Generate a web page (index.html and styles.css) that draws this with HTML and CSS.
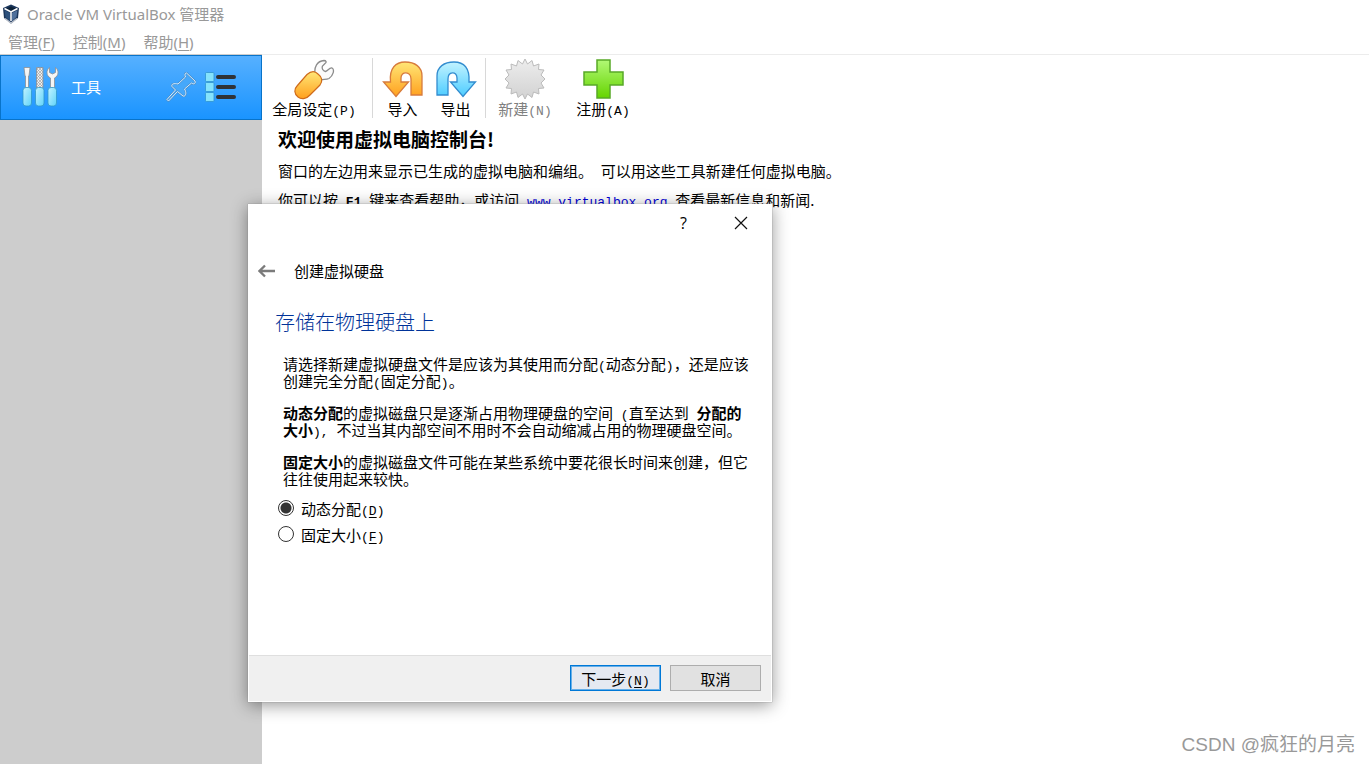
FILE: index.html
```html
<!DOCTYPE html>
<html lang="zh-CN">
<head>
<meta charset="utf-8">
<title>Oracle VM VirtualBox 管理器</title>
<link rel="stylesheet" href="styles.css">
</head>
<body>
<div class="app">
  <header class="titlebar">
    <svg class="logo" viewBox="0 0 18 20" aria-hidden="true">
      <path d="M1 4 9 .5 17 4 16 14 9 19.500 2 14Z" fill="#1b365c"/>
      <path d="M4 4.500 9 2.500 14 4.500 9 7Z" fill="#0d2138"/>
      <path d="M2.500 6 8 9V17L3.500 13Z" fill="#2c507c"/>
      <path d="M15.500 6 10 9V17L14.500 13Z" fill="#4f709b"/>
      <path d="M2.500 4.500 9 8 15.500 4.500M9 8V17" fill="none" stroke="#fff" stroke-width="1.500"/>
      <path d="M3 14.500 9 19 15 14.500" fill="none" stroke="#b8bfc9" stroke-width="1.500"/>
    </svg>
    <span>Oracle VM VirtualBox 管理器</span>
  </header>
  <nav class="menubar">
    <button class="menu">管理(<u>F</u>)</button>
    <button class="menu">控制(<u>M</u>)</button>
    <button class="menu">帮助(<u>H</u>)</button>
  </nav>
  <div class="workspace">
    <aside class="sidebar">
      <div class="tools">
        <svg class="tools-icon" viewBox="0 0 38 42" aria-hidden="true">
          <defs>
            <linearGradient id="handle" x1="0" y1="0" x2="1" y2="1"><stop offset="0" stop-color="#c4f3ff"/><stop offset="1" stop-color="#5fd3fa"/></linearGradient>
            <pattern id="knurl" width="3" height="3" patternUnits="userSpaceOnUse"><rect width="3" height="3" fill="#eee"/><path d="M0 3 3 0M0 0 3 3" stroke="#999" stroke-width=".6"/></pattern>
          </defs>
          <path d="M2 1.500H8L7 10H6.500V22H3.500V10H3Z" fill="#f5f5f5" stroke="#8b8f95" stroke-width=".8"/>
          <path d="M14.500 1.500H21V22H14.500Z" fill="url(#knurl)" stroke="#8b8f95" stroke-width=".8"/>
          <path d="M27.500 1.500C24 4 24 10 28.500 12V22H32.500V12C37 10 37 4 33.500 1.500V6.500L30.500 8 27.500 6.500Z" fill="#f5f5f5" stroke="#8b8f95" stroke-width=".8"/>
          <g fill="url(#handle)" stroke="#3198c8" stroke-width=".8"><rect x="1" y="21.500" width="8.500" height="18.500" rx="3"/><rect x="13.500" y="21.500" width="8.500" height="18.500" rx="3"/><rect x="26" y="21.500" width="8.500" height="18.500" rx="3"/></g>
        </svg>
        <span class="tools-label">工具</span>
        <button class="icon-button" aria-label="固定">
          <svg class="pin-icon" viewBox="0 0 30 30"><path id="pin" d="M20.500 1 29 9C30 12 27.500 12.500 25.500 11L18.500 17C21 21 19.500 25 17 24L11.500 19.500 2.500 29 1 27.500 9.500 18 6 14.500C5 12 8 11 12 12L19.500 5C18.500 2.500 19 1 20.500 1Z" fill="#45a8fb" stroke="#4a91cd" stroke-width="1.800"/><use href="#pin" class="pin-line"/><path d="M20.500 1 29 9C30 12 27.500 12.500 25.500 11L18.500 17C21 21 19.500 25 17 24L11.500 19.500 2.500 29 1 27.500 9.500 18 6 14.500C5 12 8 11 12 12L19.500 5C18.500 2.500 19 1 20.500 1Z" fill="none" stroke="#d5ebff"/></svg>
        </button>
        <button class="icon-button" aria-label="列表">
          <svg class="list-icon" viewBox="0 0 32 30"><g fill="#85e2fc" stroke="#2f93ce" stroke-width=".8"><rect x=".5" y=".5" width="8.500" height="9" rx="1"/><rect x=".5" y="10.500" width="8.500" height="9" rx="1"/><rect x=".5" y="20.500" width="8.500" height="9" rx="1"/></g><path d="M13 5H29M13 15H29M13 25H29" stroke="#303236" stroke-width="4" stroke-linecap="round"/></svg>
        </button>
      </div>
    </aside>
    <main class="content">
      <div class="toolbar">
        <button class="tool tool-settings">
          <svg class="tool-icon" viewBox="0 0 42 42">
            <defs><linearGradient id="orange" x1="0" y1="0" x2="0" y2="1"><stop offset="0" stop-color="#ffe676"/><stop offset="1" stop-color="#ffa01e"/></linearGradient></defs>
            <path d="M22 16C21 9 24 3 31 2.500C33 2.500 34 4 32 5.500L29.500 8C28.500 10.500 30 13 32.500 13.500C35 13 36 9.500 39 10C42 11.500 40 18 36 20.500C33 22 30 21 28.500 22L27 23Z" fill="#fbfbfb" stroke="#8b8b8b" stroke-width="1.300"/>
            <path d="M14 16.500C18 13 22 13 25 16C29 19 30 23 27 27L17 37C13 41.500 8 41.500 5 39C1 36 1 31 4 28Z" fill="url(#orange)" stroke="#cf6b1b" stroke-width="1.200"/>
          </svg>
          <span>全局设定<span class="mono">(P)</span></span>
        </button>
        <span class="separator"></span>
        <button class="tool tool-small">
          <svg class="tool-icon" viewBox="0 0 42 42"><path d="M40 37H29V21C29 13 19 13 19 20V24H26.500L14 38.500 1.500 24H8.500C7 10 14 4 23 4C33 4 40 9 40 18Z" fill="url(#orange)" stroke="#d77b3c" stroke-width="1.300"/></svg>
          <span>导入</span>
        </button>
        <button class="tool tool-small">
          <svg class="tool-icon" viewBox="0 0 42 42"><defs><linearGradient id="cyan" x1="0" y1="0" x2="0" y2="1"><stop offset="0" stop-color="#c2f3ff"/><stop offset="1" stop-color="#4dccff"/></linearGradient></defs><path d="M2 37H13V21C13 13 22 13 22 20V24H15.500L28 38.500 40.500 24H34C35 10 29 4 19 4C9 4 2 9 2 18Z" fill="url(#cyan)" stroke="#328ccf" stroke-width="1.300"/></svg>
          <span>导出</span>
        </button>
        <span class="separator"></span>
        <button class="tool tool-wide" disabled>
          <svg class="tool-icon" viewBox="0 0 42 42"><defs><linearGradient id="silver" x1="0" y1="0" x2="0" y2="1"><stop offset="0" stop-color="#ededed"/><stop offset="1" stop-color="#d2d2d2"/></linearGradient></defs><path d="M21 1 23.500 6 28 2.500 29.500 8 35 6 34.500 11.500 40 12 37 17 41 21 37 25 40 30 34.500 30.500 35 36 29.500 34 28 39.500 23.500 36 21 41 18.500 36 14 39.500 12.500 34 7 36 7.500 30.500 2 30 5 25 1 21 5 17 2 12 7.500 11.500 7 6 12.500 8 14 2.500 18.500 6Z" fill="url(#silver)" stroke="#bbb"/></svg>
          <span>新建<span class="mono">(N)</span></span>
        </button>
        <button class="tool tool-wide">
          <svg class="tool-icon" viewBox="0 0 42 42"><defs><linearGradient id="green" x1="0" y1="0" x2="0" y2="1"><stop offset="0" stop-color="#b1f875"/><stop offset="1" stop-color="#65d400"/></linearGradient></defs><path d="M15 2H28V14H41V27H28V40H15V27H2V14H15Z" fill="url(#green)" stroke="#58a927" stroke-width="1.500"/></svg>
          <span>注册<span class="mono">(A)</span></span>
        </button>
      </div>
      <section class="welcome">
        <h1>欢迎使用虚拟电脑控制台!</h1>
        <p>窗口的左边用来显示已生成的虚拟电脑和编组。<span class="mono"> </span>可以用这些工具新建任何虚拟电脑。</p>
        <p>你可以按<span class="mono"> <b>F1</b> </span>键来查看帮助，或访问<span class="mono"> <a href="#">www.virtualbox.org</a> </span>查看最新信息和新闻.</p>
      </section>
    </main>
  </div>

  <form class="dialog" role="dialog" aria-labelledby="dialog-name">
    <div class="dialog-controls">
      <button type="button" class="window-button" aria-label="帮助">?</button>
      <button type="button" class="window-button" aria-label="关闭"><svg class="close-icon" viewBox="0 0 14 14"><path d="M1 1 13 13M13 1 1 13" stroke="#111" stroke-width="1.200"/></svg></button>
    </div>
    <div class="dialog-nav">
      <button type="button" class="back" aria-label="返回"><svg class="back-icon" viewBox="0 0 17 14"><path d="M17 7H2M7 1.500 1.500 7 7 12.500" fill="none" stroke="#7b7b7b" stroke-width="2.300"/></svg></button>
      <span id="dialog-name">创建虚拟硬盘</span>
    </div>
    <div class="dialog-body">
      <h2>存储在物理硬盘上</h2>
      <div class="description">
        <p>请选择新建虚拟硬盘文件是应该为其使用而分配<span class="mono">(</span>动态分配<span class="mono">)</span>，还是应该创建完全分配<span class="mono">(</span>固定分配<span class="mono">)</span>。</p>
        <p><b>动态分配</b>的虚拟磁盘只是逐渐占用物理硬盘的空间<span class="mono"> (</span>直至达到<span class="mono"> </span><b>分配的大小</b><span class="mono">), </span>不过当其内部空间不用时不会自动缩减占用的物理硬盘空间。</p>
        <p><b>固定大小</b>的虚拟磁盘文件可能在某些系统中要花很长时间来创建，但它往往使用起来较快。</p>
      </div>
      <div class="options">
        <label class="option"><input type="radio" name="storage" checked><span>动态分配<span class="mono">(<u>D</u>)</span></span></label>
        <label class="option"><input type="radio" name="storage"><span>固定大小<span class="mono">(<u>F</u>)</span></span></label>
      </div>
    </div>
    <footer class="dialog-footer">
      <button type="button" class="action action-default"><span>下一步<span class="mono">(<u>N</u>)</span></span></button>
      <button type="button" class="action">取消</button>
    </footer>
  </form>
  <div class="watermark">CSDN @疯狂的月亮</div>
</div>
</body>
</html>
```
FILE: styles.css
```css
* { box-sizing: border-box; }
body {
  margin: 0;
  color: #000;
  background: #fff;
  font: 15px/17px "Noto Sans CJK SC", sans-serif;
  text-spacing-trim: space-all;
}
button {
  margin: 0;
  padding: 0;
  border: 0;
  background: none;
  color: inherit;
  font: inherit;
}
p, h1, h2 { margin: 0; }
.mono { font-family: "Liberation Mono", monospace; font-size: 13px; line-height: 0; white-space: pre-wrap; }
u { text-underline-offset: 2px; }
.app {
  position: relative;
  display: flex;
  flex-direction: column;
  min-height: 100vh;
  overflow: hidden;
}
.titlebar, .menubar {
  display: flex;
  align-items: center;
  color: #999;
  font-family: "Noto Sans", "Noto Sans CJK SC", sans-serif;
}
.titlebar { height: 28px; padding-left: 2px; gap: 7px; }
.logo { width: 18px; height: 20px; }
.menubar { height: 26px; padding: 2px 0 0 8px; gap: 18px; }
.workspace { display: flex; flex: 1; }
.sidebar { width: 262px; flex: none; background: #cdcdcd; padding-top: 1px; }
.tools {
  display: flex;
  align-items: center;
  height: 65px;
  padding: 0 24px 2px 21px;
  border: 1px solid #0873c9;
  background: linear-gradient(#56b0ff, #1a94ff);
}
.tools-icon { width: 38px; height: 42px; }
.tools-label { flex: 1; margin-left: 11px; color: #fff; font-weight: 400; }
.icon-button { display: flex; margin-left: 9px; }
.pin-icon { width: 30px; height: 30px; }
.list-icon { width: 32px; height: 30px; }
.content { flex: 1; min-width: 0; border-top: 1px solid #ececec; }
.toolbar { display: flex; height: 66px; padding: 3px 0 0 12px; }
.tool { display: flex; flex-direction: column; align-items: center; white-space: nowrap; }
.tool:disabled { color: #808080; }
.tool-icon { width: 42px; height: 42px; }
.tool-settings { width: 80px; margin-right: 18px; }
.tool-small { width: 53px; }
.tool-wide { width: 78px; }
.separator { width: 1px; height: 60px; margin-right: 3px; background: #d8d8d8; }
.separator ~ .separator { margin: 0 0 0 3px; }
.welcome { padding: 7px 16px; }
.welcome h1 { font-size: 19px; line-height: 22px; font-weight: 700; }
.welcome p { margin-top: 12px; }
.welcome a { color: #0000d8; }
.dialog {
  position: absolute;
  top: 204px;
  left: 248px;
  display: flex;
  flex-direction: column;
  width: 524px;
  min-height: 498px;
  border: 1px solid #fff;
  background: #fff;
  box-shadow: 0 0 1px #777, 0 3px 16px rgba(0, 0, 0, .42);
}
.dialog-controls { display: flex; justify-content: flex-end; height: 36px; padding-right: 2px; }
.window-button {
  display: flex;
  align-items: center;
  justify-content: center;
  width: 57px;
  font: 16px "Open Sans", sans-serif;
}
.close-icon { width: 14px; height: 14px; }
.dialog-nav { display: flex; align-items: center; height: 59px; padding-left: 9px; gap: 19px; }
.back { display: flex; }
.back-icon { width: 17px; height: 14px; }
.dialog-body { flex: 1; padding: 10px 16px 0 26px; }
.dialog-body h2 { color: #003399; font-size: 20px; line-height: 24px; font-weight: 300; }
.description { display: grid; gap: 15px; padding: 21px 0 0 8px; }
.options { display: grid; gap: 10px; padding: 13px 0 0 3px; }
.option { display: flex; align-items: center; gap: 7px; height: 16px; }
.option input {
  appearance: none;
  width: 16px;
  height: 16px;
  margin: 0;
  border: 1px solid #333;
  border-radius: 50%;
  background: #fff;
}
.option input:checked { background: radial-gradient(circle, #333 5px, #fff 6px); }
.dialog-footer {
  display: flex;
  justify-content: flex-end;
  gap: 9px;
  height: 46px;
  padding: 9px 10px;
  border-top: 1px solid #dfdfdf;
  background: #f0f0f0;
}
.action { width: 91px; height: 26px; border: 1px solid #adadad; background: #e1e1e1; }
.action-default { border-color: #0078d7; background: #e5e9f1; box-shadow: inset 0 0 0 1px #66afe8; }
.watermark {
  position: absolute;
  right: 14px;
  bottom: 6px;
  color: #999;
  font: 19px/26px "Liberation Sans", "Noto Sans CJK SC", sans-serif;
}
```
